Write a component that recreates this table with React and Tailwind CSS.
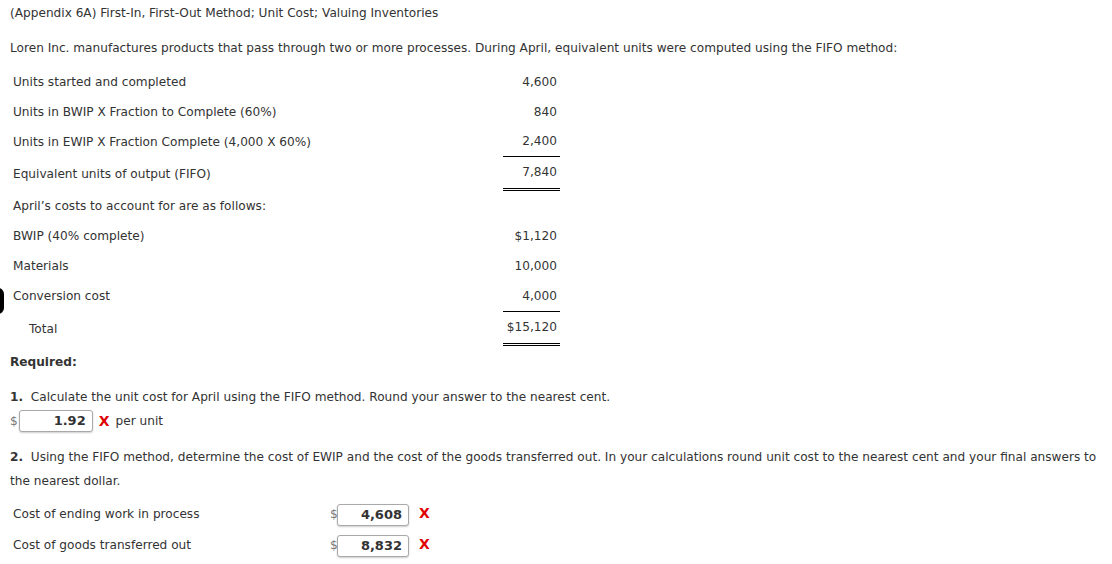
import React from "react";

const Row = ({ label, value, indent, h = "h-[30px]", line }) => (
  <div className={`flex items-center ${h}`}>
    <div className={`w-[503px] ${indent ? "pl-[29px]" : "pl-[13px]"}`}>{label}</div>
    <div
      className={`w-[57px] h-full flex items-center justify-end pr-[3px] ${
        line === "single" ? "border-b border-black" : ""
      } ${line === "double" ? "border-b-[3px] border-double border-black" : ""}`}
    >
      {value}
    </div>
  </div>
);

const Answer = ({ value, w = "w-[72px]" }) => (
  <div
    className={`${w} h-[22px] border border-[#a9a9a9] rounded-[3px] shadow-[0_1px_2px_rgba(0,0,0,0.2)] bg-white flex items-center justify-end pr-[6px] font-bold text-[13px] text-[#333]`}
  >
    {value}
  </div>
);

const RedX = () => <span className="text-[#e00000] font-bold text-[14px] leading-none">X</span>;

export default function App() {
  return (
    <div className="relative w-[1112px] h-[564px] bg-white overflow-hidden text-[12.13px] text-[#333] font-['DejaVu_Sans',Verdana,sans-serif]">
      <div className="absolute left-[-8px] top-[288px] w-[12px] h-[26px] rounded-full bg-black" />

      <div className="pl-[10px] pt-[4px] leading-[18px]">
        (Appendix 6A) First-In, First-Out Method; Unit Cost; Valuing Inventories
      </div>
      <div className="pl-[10px] mt-[17px] leading-[18px]">
        Loren Inc. manufactures products that pass through two or more processes. During April, equivalent units were
        computed using the FIFO method:
      </div>

      <div className="mt-[10px]">
        <Row label="Units started and completed" value="4,600" />
        <Row label="Units in BWIP X Fraction to Complete (60%)" value="840" />
        <Row label="Units in EWIP X Fraction Complete (4,000 X 60%)" value="2,400" h="h-[30px]" line="single" />
        <Row label="Equivalent units of output (FIFO)" value="7,840" h="h-[34px]" line="double" />
        <Row label="April’s costs to account for are as follows:" value="" h="h-[30px]" />
        <Row label="BWIP (40% complete)" value="$1,120" />
        <Row label="Materials" value="10,000" />
        <Row label="Conversion cost" value="4,000" h="h-[31px]" line="single" />
        <Row label="Total" value="$15,120" indent h="h-[34px]" line="double" />
      </div>

      <div className="pl-[10px] mt-[7px] leading-[18px] font-bold">Required:</div>

      <div className="pl-[10px] mt-[17px] leading-[18px]">
        <span className="font-bold">1.</span>&nbsp; Calculate the unit cost for April using the FIFO method. Round your
        answer to the nearest cent.
      </div>
      <div className="pl-[10px] mt-[4px] flex items-center gap-[6px]">
        <span className="text-[#777] -mr-[5px]">$</span>
        <Answer value="1.92" w="w-[74px]" />
        <RedX />
        <span>per unit</span>
      </div>

      <div className="pl-[10px] pr-[10px] mt-[13px] leading-[24px]">
        <span className="font-bold">2.</span>&nbsp; Using the FIFO method, determine the cost of EWIP and the cost of the
        goods transferred out. In your calculations round unit cost to the nearest cent and your final answers to the
        nearest dollar.
      </div>

      <div className="mt-[6px]">
        {[
          ["Cost of ending work in process", "4,608"],
          ["Cost of goods transferred out", "8,832"],
        ].map(([label, value]) => (
          <div key={label} className="flex items-center h-[31px]">
            <div className="w-[330px] pl-[13px]">{label}</div>
            <span className="text-[#777] w-[7px]">$</span>
            <Answer value={value} />
            <span className="ml-[10px]">
              <RedX />
            </span>
          </div>
        ))}
      </div>
    </div>
  );
}
